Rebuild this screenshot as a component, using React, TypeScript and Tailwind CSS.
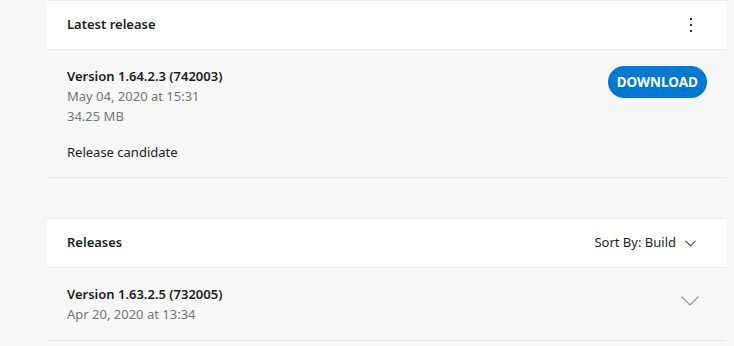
import { ChevronDown } from 'lucide-react';

const FONT = { fontFamily: '"Noto Sans", "Open Sans", sans-serif' };

function Dots() {
  return (
    <svg width="4" height="16" viewBox="0 0 4 16" className="text-[#333]">
      <rect x="1" y="1" width="2" height="2" fill="currentColor" />
      <rect x="1" y="7" width="2" height="2" fill="currentColor" />
      <rect x="1" y="13" width="2" height="2" fill="currentColor" />
    </svg>
  );
}

export default function App() {
  return (
    <div className="w-[734px] h-[346px] overflow-hidden bg-[#f7f7f7] pl-[47px] pr-[7px] text-[13px] text-[#201f1e]" style={FONT}>
      {/* Latest release */}
      <section className="border-t border-[#ececec]">
        <div className="h-[49px] bg-white flex items-center justify-between pl-[20px] pr-[34px] border-b border-[#e8e8e8]">
          <h3 className="font-semibold">Latest release</h3>
          <button className="flex items-center justify-center">
            <Dots />
          </button>
        </div>
        <div className="h-[128px] flex justify-between pl-[20px] pr-[20px] pt-[16px] border-b border-[#e8e8e8]">
          <div className="leading-[20px]">
            <p className="font-semibold">Version 1.64.2.3 (742003)</p>
            <p className="text-[#767676]">May 04, 2020 at 15:31</p>
            <p className="text-[#767676]">34.25 MB</p>
            <p className="mt-[16px]">Release candidate</p>
          </div>
          <button className="h-[32px] px-[9px] rounded-full bg-[#0078d4] text-white font-bold text-[13.5px]">
            DOWNLOAD
          </button>
        </div>
      </section>

      {/* Releases */}
      <section className="mt-[40px] border-t border-[#ececec]">
        <div className="h-[49px] bg-white flex items-center justify-between pl-[20px] pr-[27px] border-b border-[#e8e8e8]">
          <h3 className="font-semibold">Releases</h3>
          <button className="flex items-center gap-[5px]">
            <span>Sort By: Build</span>
            <ChevronDown size={19} strokeWidth={1.3} className="text-[#444]" />
          </button>
        </div>
        <div className="h-[73px] flex items-center justify-between pl-[20px] pr-[28px] border-b border-[#e8e8e8]">
          <div className="leading-[20px]">
            <p className="font-semibold">Version 1.63.2.5 (732005)</p>
            <p className="text-[#767676]">Apr 20, 2020 at 13:34</p>
          </div>
          <svg width="18" height="10" viewBox="0 0 18 10" className="text-[#999] -mt-[6px]">
            <path d="M0.5 0.5 L9 9 L17.5 0.5" fill="none" stroke="currentColor" strokeWidth="1.2" />
          </svg>
        </div>
      </section>
    </div>
  );
}
